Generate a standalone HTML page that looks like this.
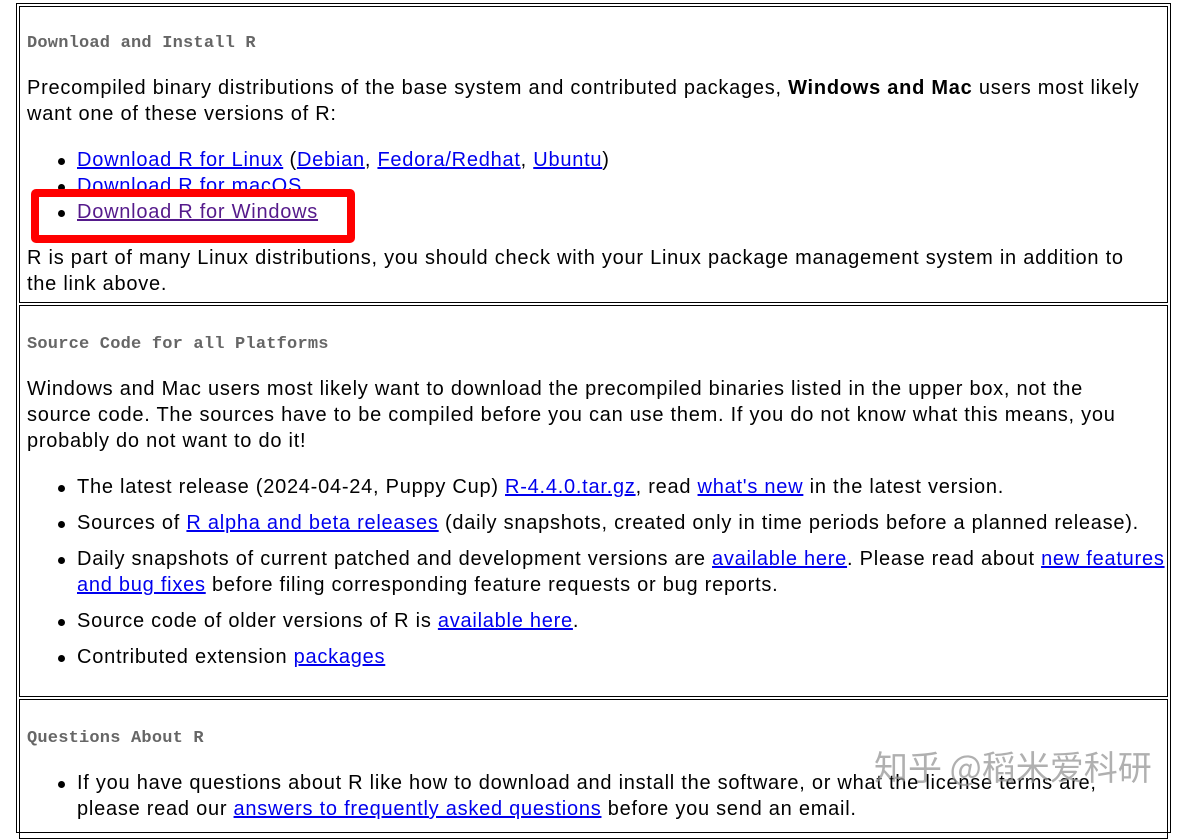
<!DOCTYPE html>
<html><head><meta charset="utf-8"><style>
body{margin:0;background:#fff;width:1188px;height:815px;overflow:hidden;position:relative;font-family:"Liberation Sans","Noto Sans CJK SC",sans-serif;font-size:20px;color:#000;letter-spacing:0.75px}
.b{position:absolute;border:1px solid #000;box-sizing:border-box}
.l{position:absolute;left:27px;white-space:nowrap;line-height:26px}
.li{position:absolute;left:77px;white-space:nowrap;line-height:26px}
.li:before{content:"";position:absolute;left:-19px;top:11px;width:7px;height:7px;border-radius:50%;background:#000}
.h{position:absolute;left:27px;font-family:"Liberation Mono",monospace;font-weight:bold;font-size:17px;color:#666;line-height:20px;letter-spacing:0.2px}
a{color:#0000ee;text-decoration:underline}
a.v{color:#551a8b}
</style></head><body>
<div class="b" style="left:16px;top:3px;width:1155px;height:830px"></div>
<div class="b" style="left:19px;top:6px;width:1149px;height:297px"></div>
<div class="b" style="left:19px;top:305px;width:1149px;height:392px"></div>
<div class="b" style="left:19px;top:699px;width:1149px;height:140px"></div>

<div class="h" style="top:34px">Download and Install R</div>
<div class="l" style="top:75px">Precompiled binary distributions of the base system and contributed packages, <b>Windows and Mac</b> users most likely</div>
<div class="l" style="top:101px">want one of these versions of R:</div>
<div class="li" style="top:147px"><a>Download R for Linux</a> (<a>Debian</a>, <a>Fedora/Redhat</a>, <a>Ubuntu</a>)</div>
<div class="li" style="top:173px"><a>Download R for macOS</a></div>
<div style="position:absolute;left:31px;top:189px;width:324px;height:54px;box-sizing:border-box;border:8px solid #f00;border-radius:5px;background:#fff"></div>
<div class="li" style="top:199px"><a class="v">Download R for Windows</a></div>
<div class="l" style="top:245px">R is part of many Linux distributions, you should check with your Linux package management system in addition to</div>
<div class="l" style="top:271px">the link above.</div>

<div class="h" style="top:335px">Source Code for all Platforms</div>
<div class="l" style="top:376px">Windows and Mac users most likely want to download the precompiled binaries listed in the upper box, not the</div>
<div class="l" style="top:402px">source code. The sources have to be compiled before you can use them. If you do not know what this means, you</div>
<div class="l" style="top:428px">probably do not want to do it!</div>
<div class="li" style="top:474px">The latest release (2024-04-24, Puppy Cup) <a>R-4.4.0.tar.gz</a>, read <a>what's new</a> in the latest version.</div>
<div class="li" style="top:510px">Sources of <a>R alpha and beta releases</a> (daily snapshots, created only in time periods before a planned release).</div>
<div class="li" style="top:546px">Daily snapshots of current patched and development versions are <a>available here</a>. Please read about <a>new features</a></div>
<div class="l" style="left:77px;top:572px"><a>and bug fixes</a> before filing corresponding feature requests or bug reports.</div>
<div class="li" style="top:608px">Source code of older versions of R is <a>available here</a>.</div>
<div class="li" style="top:644px">Contributed extension <a>packages</a></div>

<div class="h" style="top:729px">Questions About R</div>
<div class="li" style="top:770px">If you have questions about R like how to download and install the software, or what the license terms are,</div>
<div class="l" style="left:77px;top:796px">please read our <a>answers to frequently asked questions</a> before you send an email.</div>
<div style="position:absolute;left:874px;top:746px;font-size:34px;letter-spacing:0;color:rgba(150,150,150,0.75);font-family:'Noto Sans CJK SC',sans-serif;white-space:nowrap;line-height:40px">知乎 @稻米爱科研</div>
</body></html>
